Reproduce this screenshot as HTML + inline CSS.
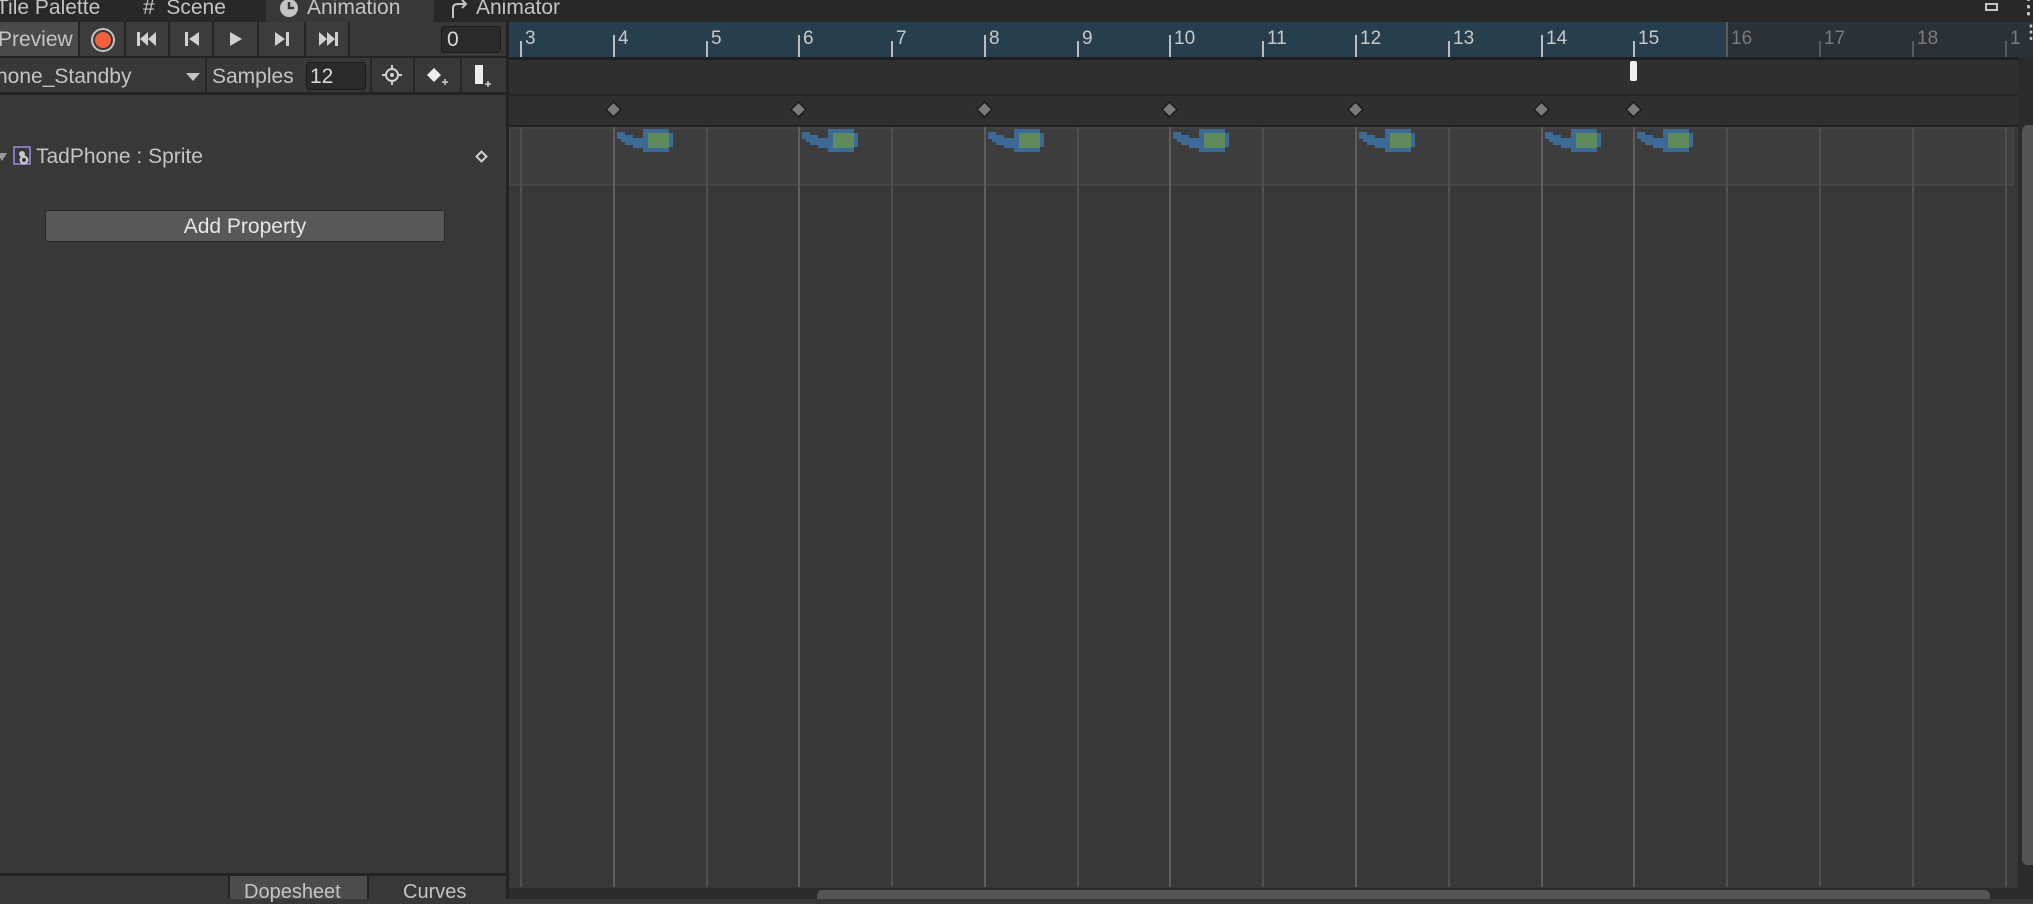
<!DOCTYPE html>
<html><head><style>
*{margin:0;padding:0;box-sizing:border-box}
body{width:2033px;height:899px;background:#383838;position:relative;overflow:hidden;font-family:"Liberation Sans",sans-serif;color:#c4c4c4}
.a{position:absolute}
.t{font-size:21px;white-space:nowrap}
.btn{position:absolute;background:#3c3c3c;border-right:2px solid #242424}
.vl{position:absolute;width:2px;background:#4f4f4f;top:127px;height:760px}
.tick{position:absolute;width:2px;background:#bdbdbd;bottom:0}
.lab{position:absolute;top:6px;font-size:19px;color:#c8c8c8}
.key{position:absolute;top:103px;width:13px;height:13px;background:#7a7a7a;border:2px solid #1e1e1e;transform:rotate(45deg)}
</style></head><body>
<!-- tab bar -->
<div class="a" style="left:0;top:0;width:2033px;height:22px;background:#282828"></div>
<div class="a" style="left:266px;top:0;width:168px;height:22px;background:#383838"></div>
<div class="a t" style="left:-4px;top:-4px">Tile Palette</div>
<div class="a t" style="left:143px;top:-4px">#&nbsp; Scene</div>
<svg class="a" style="left:279px;top:-2px" width="20" height="20"><circle cx="10" cy="10" r="9" fill="#c4c4c4"/><path d="M10 4v6h5" stroke="#383838" stroke-width="2.5" fill="none"/></svg>
<div class="a t" style="left:307px;top:-4px">Animation</div>
<svg class="a" style="left:450px;top:0" width="20" height="18" fill="none" stroke="#c4c4c4" stroke-width="2"><path d="M3 18V8c0-3 2-4 5-4h8M12 0l4 4-4 4"/></svg>
<div class="a t" style="left:476px;top:-4px">Animator</div>
<div class="a" style="left:1985px;top:3px;width:13px;height:8px;border:2px solid #c4c4c4"></div>
<div class="a t" style="left:2018px;top:-6px;font-weight:bold">⋮</div>
<!-- toolbar -->
<div class="a" style="left:0;top:22px;width:508px;height:36px;background:#383838;border-bottom:2px solid #232323"></div>
<div class="btn" style="left:0;top:22px;width:80px;height:34px;background:#4a4a4a"></div>
<div class="a t" style="left:-2px;top:28px">Preview</div>
<div class="btn" style="left:80px;top:22px;width:46px;height:34px"></div>
<div class="a" style="left:91px;top:28px;width:24px;height:24px;border-radius:50%;border:2px solid #c4c4c4;background:#383838"></div>
<div class="a" style="left:95px;top:32px;width:16px;height:16px;border-radius:50%;background:#f0603a"></div>
<div class="btn" style="left:126px;top:22px;width:44px;height:34px"></div>
<div class="btn" style="left:170px;top:22px;width:44px;height:34px"></div>
<div class="btn" style="left:214px;top:22px;width:45px;height:34px"></div>
<div class="btn" style="left:259px;top:22px;width:47px;height:34px"></div>
<div class="btn" style="left:306px;top:22px;width:44px;height:34px"></div>
<svg class="a" style="left:126px;top:22px" width="224" height="34" fill="#d0d0d0">
<rect x="11" y="10" width="3" height="14"/><path d="M22 10 L14 17 L22 24Z M30 10 L22 17 L30 24Z"/>
<rect x="59" y="10" width="3" height="14"/><path d="M73 10 L63 17 L73 24Z"/>
<path d="M104 10 L116 17 L104 24Z"/>
<path d="M149 10 L159 17 L149 24Z"/><rect x="160" y="10" width="3" height="14"/>
<path d="M193 10 L201 17 L193 24Z M201 10 L209 17 L201 24Z"/><rect x="209" y="10" width="3" height="14"/>
</svg>
<div class="a" style="left:441px;top:26px;width:60px;height:27px;background:#2a2a2a;border:1px solid #1a1a1a;border-radius:4px"></div>
<div class="a t" style="left:447px;top:28px;color:#d8d8d8">0</div>
<!-- row2 -->
<div class="a" style="left:0;top:58px;width:508px;height:37px;background:#383838;border-bottom:3px solid #232323"></div>
<div class="a" style="left:205px;top:58px;width:2px;height:36px;background:#262626"></div>
<div class="a t" style="left:-4px;top:65px">hone_Standby</div>
<div class="a" style="left:186px;top:73px;border-left:7px solid transparent;border-right:7px solid transparent;border-top:8px solid #c4c4c4"></div>
<div class="a t" style="left:212px;top:65px">Samples</div>
<div class="a" style="left:306px;top:62px;width:60px;height:28px;background:#2a2a2a;border:1px solid #1a1a1a;border-radius:4px"></div>
<div class="a t" style="left:310px;top:65px;color:#d8d8d8">12</div>
<div class="a" style="left:370px;top:58px;width:2px;height:36px;background:#262626"></div>
<div class="a" style="left:413px;top:58px;width:2px;height:36px;background:#262626"></div>
<div class="a" style="left:460px;top:58px;width:2px;height:36px;background:#262626"></div>
<svg class="a" style="left:372px;top:58px" width="136" height="36" fill="none" stroke="#d0d0d0" stroke-width="2">
<circle cx="20" cy="17" r="6"/><path d="M20 7v4M20 23v4M10 17h4M26 17h4"/><circle cx="20" cy="17" r="1" fill="#d0d0d0"/>
<path d="M62 10l7 7-7 7-7-7z" fill="#eee" stroke="none"/><path d="M70 24h6M73 21v6" stroke-width="1.5"/>
<rect x="103" y="7" width="8" height="19" fill="#eee" stroke="none"/><path d="M113 26h6M116 23v6" stroke-width="1.5"/>
</svg>
<!-- left panel -->
<div class="a" style="left:506px;top:22px;width:3px;height:877px;background:#232323"></div>
<div class="a" style="left:-3px;top:153px;border-left:5px solid transparent;border-right:5px solid transparent;border-top:8px solid #999"></div>
<svg class="a" style="left:12px;top:145px" width="22" height="22"><rect x="2" y="2" width="16" height="17" fill="none" stroke="#a487e6" stroke-width="1.5"/><circle cx="10" cy="9" r="3" fill="#c8c8c8"/><circle cx="12" cy="15" r="4.5" fill="#c8c8c8"/><circle cx="12" cy="15" r="2" fill="#383838"/></svg>
<div class="a t" style="left:36px;top:145px;color:#c4c4c4">TadPhone : Sprite</div>
<div class="a" style="left:477px;top:152px;width:9px;height:9px;border:2px solid #d0d0d0;transform:rotate(45deg)"></div>
<div class="a" style="left:45px;top:210px;width:400px;height:32px;background:#585858;border:1px solid #2a2a2a;border-radius:3px"></div>
<div class="a t" style="left:45px;top:215px;width:400px;text-align:center;color:#e6e6e6">Add Property</div>
<div class="a" style="left:0;top:873px;width:506px;height:3px;background:#232323"></div>
<div class="a" style="left:0;top:876px;width:228px;height:23px;background:#383838"></div>
<div class="a" style="left:228px;top:876px;width:139px;height:23px;background:#4c4c4c;border-left:2px solid #232323"></div>
<div class="a" style="left:367px;top:876px;width:2px;height:23px;background:#232323"></div>
<div class="a t" style="left:244px;top:881px;font-size:20px">Dopesheet</div>
<div class="a t" style="left:403px;top:881px;font-size:20px">Curves</div>
<!-- timeline -->
<div class="a" style="left:509px;top:22px;width:1524px;height:35px;background:#2b3237"></div>
<div class="a" style="left:509px;top:22px;width:1219px;height:35px;background:#273f4d"></div>
<div class="a" style="left:509px;top:57px;width:1524px;height:3px;background:#1f1f1f"></div>
<div class="a" style="left:509px;top:60px;width:1509px;height:34px;background:#2f2f2f"></div>
<div class="a" style="left:509px;top:94px;width:1509px;height:2px;background:#262626"></div>
<div class="a" style="left:509px;top:96px;width:1509px;height:29px;background:#2f2f2f"></div>
<div class="a" style="left:509px;top:125px;width:1509px;height:2px;background:#232323"></div>
<div class="a" style="left:509px;top:127px;width:1505px;height:59px;background:#3d3d3d;border:2px solid #444"></div>
<div class="a" style="left:509px;top:22px;width:1524px;height:35px">
<div class="tick" style="left:11px;height:16px"></div><div class="lab" style="left:16px">3</div>
<div class="tick" style="left:104px;height:22px"></div><div class="lab" style="left:109px">4</div>
<div class="tick" style="left:197px;height:16px"></div><div class="lab" style="left:202px">5</div>
<div class="tick" style="left:289px;height:22px"></div><div class="lab" style="left:294px">6</div>
<div class="tick" style="left:382px;height:16px"></div><div class="lab" style="left:387px">7</div>
<div class="tick" style="left:475px;height:22px"></div><div class="lab" style="left:480px">8</div>
<div class="tick" style="left:568px;height:16px"></div><div class="lab" style="left:573px">9</div>
<div class="tick" style="left:660px;height:22px"></div><div class="lab" style="left:665px">10</div>
<div class="tick" style="left:753px;height:16px"></div><div class="lab" style="left:758px">11</div>
<div class="tick" style="left:846px;height:22px"></div><div class="lab" style="left:851px">12</div>
<div class="tick" style="left:939px;height:16px"></div><div class="lab" style="left:944px">13</div>
<div class="tick" style="left:1032px;height:22px"></div><div class="lab" style="left:1037px">14</div>
<div class="tick" style="left:1124px;height:16px"></div><div class="lab" style="left:1129px">15</div>
<div class="tick" style="left:1217px;height:35px;background:#5a5a5a"></div><div class="lab" style="left:1222px;color:#7a7a7a">16</div>
<div class="tick" style="left:1310px;height:16px;background:#5a5a5a"></div><div class="lab" style="left:1315px;color:#7a7a7a">17</div>
<div class="tick" style="left:1403px;height:16px;background:#5a5a5a"></div><div class="lab" style="left:1408px;color:#7a7a7a">18</div>
<div class="tick" style="left:1496px;height:16px;background:#5a5a5a"></div><div class="lab" style="left:1501px;color:#7a7a7a">1</div>
</div>
<div class="vl" style="left:520px"></div><div class="vl" style="left:613px;background:#5e5e5e"></div><div class="vl" style="left:706px"></div><div class="vl" style="left:798px;background:#5e5e5e"></div><div class="vl" style="left:891px"></div><div class="vl" style="left:984px;background:#5e5e5e"></div><div class="vl" style="left:1077px"></div><div class="vl" style="left:1169px;background:#5e5e5e"></div><div class="vl" style="left:1262px"></div><div class="vl" style="left:1355px;background:#5e5e5e"></div><div class="vl" style="left:1448px"></div><div class="vl" style="left:1541px;background:#5e5e5e"></div><div class="vl" style="left:1633px;background:#5e5e5e"></div><div class="vl" style="left:1726px"></div><div class="vl" style="left:1819px"></div><div class="vl" style="left:1912px"></div><div class="vl" style="left:2005px"></div>
<div class="key" style="left:607px"></div><div class="key" style="left:792px"></div><div class="key" style="left:978px"></div><div class="key" style="left:1163px"></div><div class="key" style="left:1349px"></div><div class="key" style="left:1535px"></div><div class="key" style="left:1627px"></div>
<div class="a" style="left:1630px;top:61px;width:7px;height:20px;background:#f0f0f0;border-radius:2px"></div>
<svg class="a" style="left:0;top:0" width="2033" height="899">
<defs><g id="s"><path d="M0 3H8V6H16V9H26V0H52V4H56V18H52V23H26V19H16V16H8V13H4V10H0Z" fill="#3d6997"/><rect x="31" y="4" width="21" height="15" fill="#5f8a5c"/></g></defs>
<use href="#s" x="617" y="129"/><use href="#s" x="802" y="129"/><use href="#s" x="988" y="129"/><use href="#s" x="1173" y="129"/><use href="#s" x="1359" y="129"/><use href="#s" x="1545" y="129"/><use href="#s" x="1637" y="129"/>
</svg>
<!-- scrollbars -->
<div class="a" style="left:2018px;top:57px;width:15px;height:842px;background:#2b2b2b"></div>
<div class="a" style="left:2022px;top:125px;width:11px;height:740px;background:#555;border-radius:6px 0 0 6px"></div>
<div class="a t" style="left:2022px;top:22px;font-weight:bold;font-size:18px">⋮</div>
<div class="a" style="left:509px;top:888px;width:1509px;height:11px;background:#2b2b2b"></div>
<div class="a" style="left:817px;top:890px;width:1173px;height:9px;background:#555;border-radius:5px 5px 0 0"></div>
</body></html>
